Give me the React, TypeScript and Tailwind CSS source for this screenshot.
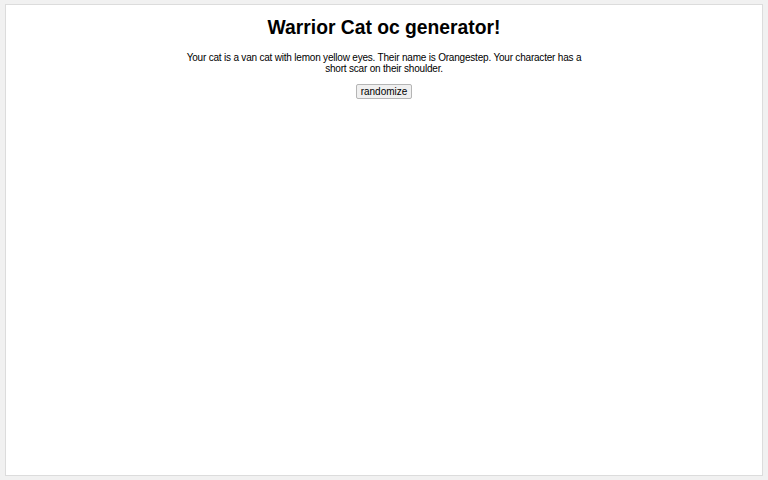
export default function App() {
  return (
    <div className="h-[480px] w-[768px] bg-[#f1f1f1] p-[4px_5px_4px_5px] font-['Liberation_Sans',Arial,sans-serif] text-black">
      <div className="flex h-full flex-col items-center border border-[#dcdcdc] bg-white pt-[11px]">
        <h1 className="text-[19.3px] font-bold leading-[24px]">Warrior Cat oc generator!</h1>
        <p className="mt-[12px] w-[400px] text-center text-[10px] leading-[11px] tracking-[-0.2px]">
          Your cat is a van cat with lemon yellow eyes. Their name is Orangestep. Your character has a
          short scar on their shoulder.
        </p>
        <button className="mt-[10px] rounded-[2px] border border-[#b5b5b5] bg-[#f0f0f0] px-[4px] py-0 text-[10px] leading-[13px]">
          randomize
        </button>
      </div>
    </div>
  );
}
